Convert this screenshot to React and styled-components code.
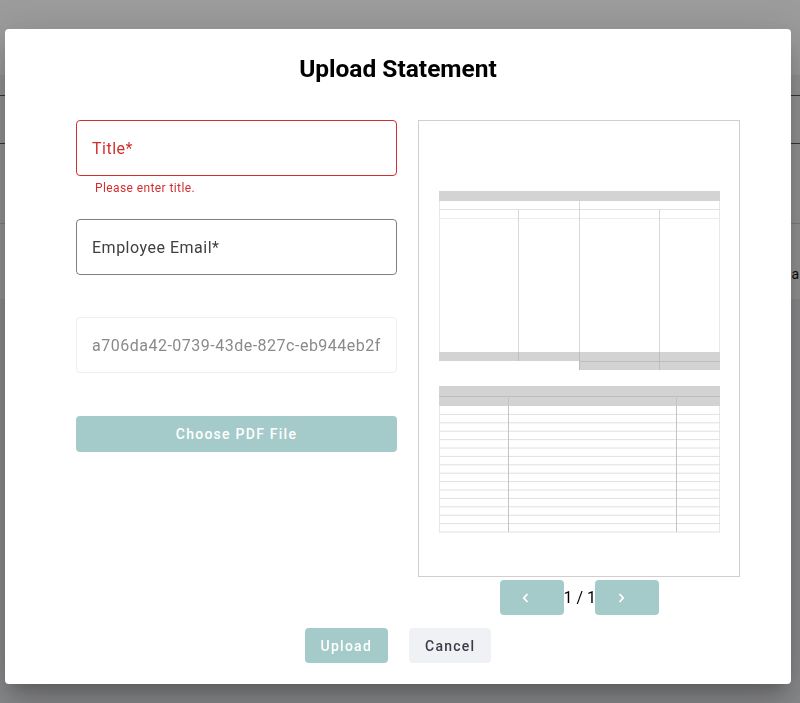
import React from "react"
import styled, { createGlobalStyle } from "styled-components"

const GlobalStyle = createGlobalStyle`
  html, body {
    margin: 0;
    padding: 0;
    height: 703px;
    overflow: hidden;
    font-family: Roboto, "Liberation Sans", Arial, sans-serif;
  }
`

// page behind the dialog
const Page = styled.div`
  height: 703px;
  background: #e4e5e8;
  display: flex;
  flex-direction: column;
`
const TopBar = styled.div`
  height: 75px;
  background: #ffffff;
`
const Sheet = styled.div`
  background: #f2f2f3;
  display: flex;
  flex-direction: column;
`
const SheetRow = styled.div`
  height: ${p => p.h}px;
  border-bottom: 1px solid ${p => p.line || "#c8c8ca"};
  display: flex;
  align-items: center;
  justify-content: flex-end;
  box-sizing: border-box;
  padding-top: ${p => p.pt || 0}px;
  font-size: 14px;
  color: #111;
`
const Clip = styled.span`
  margin-right: 1px;
`

// overlay + dialog
const Backdrop = styled.div`
  position: fixed;
  inset: 0;
  background: rgba(0, 0, 0, 0.39);
  display: flex;
  align-items: flex-start;
  padding: 29px 0 0 5px;
`
const Dialog = styled.div`
  width: 786px;
  height: 655px;
  box-sizing: border-box;
  background: #fff;
  border-radius: 4px;
  box-shadow: 0 11px 15px -7px rgba(0,0,0,.2), 0 24px 38px 3px rgba(0,0,0,.14), 0 9px 46px 8px rgba(0,0,0,.12);
  padding: 24px 0 21px;
  display: flex;
  flex-direction: column;
`
const Heading = styled.h2`
  margin: 0;
  text-align: center;
  font-size: 24.5px;
  line-height: 32px;
  font-weight: 700;
  color: #000;
`
const Body = styled.div`
  display: grid;
  grid-template-columns: 321px 322px;
  column-gap: 21px;
  padding-left: 71px;
  margin-top: 35px;
`
const Column = styled.div`
  display: flex;
  flex-direction: column;
`
const Field = styled.div`
  height: 56px;
  box-sizing: border-box;
  border: 1px solid ${p => p.$border};
  border-radius: 4px;
  display: flex;
  align-items: center;
  padding: 0 15px;
  margin-top: ${p => p.$top || 0}px;
  font-size: 16px;
  letter-spacing: 0.5px;
  color: ${p => p.$color};
  white-space: nowrap;
  overflow: hidden;
`
const Helper = styled.div`
  margin-top: 4px;
  padding-left: 19px;
  font-size: 12px;
  line-height: 16px;
  letter-spacing: 0.4px;
  color: #d32f2f;
`
const Button = styled.button`
  height: ${p => p.$h || 35}px;
  border: none;
  border-radius: 4px;
  background: ${p => p.$ghost ? "#f0f1f5" : "#a4cbc9"};
  color: ${p => p.$ghost ? "#3b3b4a" : "#fff"};
  font-family: inherit;
  font-size: 14px;
  font-weight: 500;
  letter-spacing: 1.25px;
  padding: 0 16px;
  display: flex;
  align-items: center;
  justify-content: center;
  cursor: pointer;
`
const WideButton = styled(Button)`
  width: 100%;
  margin-top: 43px;
`
const Preview = styled.div`
  height: 457px;
  box-sizing: border-box;
  border: 1px solid #cfcfcf;
  background: #fff;
`
const Pager = styled.div`
  margin-top: 3px;
  display: flex;
  justify-content: center;
  align-items: center;
`
const PageBtn = styled(Button)`
  width: 64px;
  flex-shrink: 0;
  padding: 0 12px 0 0;
`
const PageCount = styled.span`
  width: 31px;
  flex-shrink: 0;
  white-space: nowrap;
  text-align: center;
  font-size: 16px;
  color: #000;
`
const Footer = styled.div`
  margin-top: 13px;
  display: flex;
  justify-content: center;
  gap: 21px;
`

const Chevron = ({ dir }) => (
  <svg width="10" height="12" viewBox="0 0 10 12">
    <path d={dir === "left" ? "M6.5 2 L2.8 6 L6.5 10" : "M3.5 2 L7.2 6 L3.5 10"} fill="none" stroke="#fff" strokeWidth="1.8" />
  </svg>
)

const PdfPage = () => {
  const rows = Array.from({ length: 15 }, (_, i) => 285 + (i + 1) * 8.4)
  return (
    <svg width="320" height="455" viewBox="0 0 320 455">
      {/* first table */}
      <rect x="20" y="70" width="281" height="10" fill="#d3d3d3" />
      <line x1="20.5" y1="80" x2="20.5" y2="231" stroke="#e8e8e8" />
      <line x1="300.5" y1="80" x2="300.5" y2="231" stroke="#e8e8e8" />
      <line x1="20" y1="88.5" x2="301" y2="88.5" stroke="#e2e2e2" />
      <line x1="20" y1="97.5" x2="301" y2="97.5" stroke="#ececec" />
      <line x1="160.5" y1="80" x2="160.5" y2="249" stroke="#d8d8d8" />
      <line x1="99.5" y1="88" x2="99.5" y2="240" stroke="#d8d8d8" />
      <line x1="240.5" y1="88" x2="240.5" y2="249" stroke="#d8d8d8" />
      <rect x="20" y="231" width="281" height="9" fill="#d3d3d3" />
      <rect x="160" y="240" width="141" height="9" fill="#d3d3d3" />
      <line x1="160" y1="240.5" x2="301" y2="240.5" stroke="#bdbdbd" />
      <line x1="99.5" y1="231" x2="99.5" y2="240" stroke="#bdbdbd" />
      <line x1="160.5" y1="231" x2="160.5" y2="249" stroke="#bdbdbd" />
      <line x1="240.5" y1="231" x2="240.5" y2="249" stroke="#bdbdbd" />
      {/* second table */}
      <rect x="20" y="265" width="281" height="20" fill="#d3d3d3" />
      <line x1="20" y1="275.5" x2="301" y2="275.5" stroke="#bdbdbd" />
      <line x1="20.5" y1="285" x2="20.5" y2="411" stroke="#e8e8e8" />
      <line x1="300.5" y1="285" x2="300.5" y2="411" stroke="#e8e8e8" />
      {rows.map(y => (
        <line key={y} x1="20" y1={y} x2="301" y2={y} stroke="#e0e0e0" />
      ))}
      <line x1="89.5" y1="275" x2="89.5" y2="411" stroke="#c4c4c4" />
      <line x1="257.5" y1="275" x2="257.5" y2="411" stroke="#c4c4c4" />
    </svg>
  )
}

const App = () => (
  <>
    <GlobalStyle />
    <Page>
      <TopBar />
      <Sheet>
        <SheetRow h={21} line="#5a5a5c" />
        <SheetRow h={48} line="#5a5a5c" />
        <SheetRow h={20} line="#f2f2f3" />
        <SheetRow h={60} line="#d0d0d2" />
        <SheetRow h={75} pt={26} line="#f2f2f3"><Clip>a</Clip></SheetRow>
      </Sheet>
    </Page>
    <Backdrop>
      <Dialog>
        <Heading>Upload Statement</Heading>
        <Body>
          <Column>
            <Field $border="#d32f2f" $color="#d32f2f">Title*</Field>
            <Helper>Please enter title.</Helper>
            <Field $border="#7f7f7f" $color="#404040" $top={23}>Employee Email*</Field>
            <Field $border="#eeeeee" $color="#8a8a8a" $top={42}>a706da42-0739-43de-827c-eb944eb2f</Field>
            <WideButton $h={36}>Choose PDF File</WideButton>
          </Column>
          <Column>
            <Preview><PdfPage /></Preview>
            <Pager>
              <PageBtn><Chevron dir="left" /></PageBtn>
              <PageCount>1 / 1</PageCount>
              <PageBtn><Chevron dir="right" /></PageBtn>
            </Pager>
          </Column>
        </Body>
        <Footer>
          <Button>Upload</Button>
          <Button $ghost>Cancel</Button>
        </Footer>
      </Dialog>
    </Backdrop>
  </>
)

export default App
